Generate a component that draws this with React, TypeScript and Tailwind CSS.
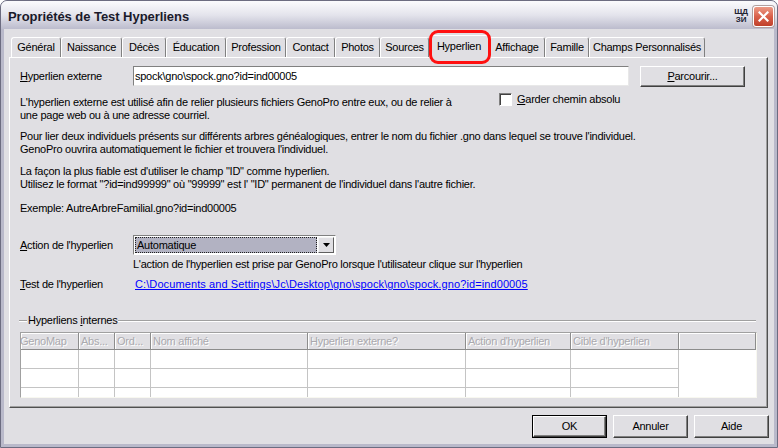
import React from 'react';

const tabs = [
  { label: 'Général', w: 'w-[50px]' },
  { label: 'Naissance', w: 'w-[61px]' },
  { label: 'Décès', w: 'w-[44px]' },
  { label: 'Éducation', w: 'w-[60px]' },
  { label: 'Profession', w: 'w-[60px]' },
  { label: 'Contact', w: 'w-[49px]' },
  { label: 'Photos', w: 'w-[45px]' },
  { label: 'Sources', w: 'w-[49px]' },
  { label: 'Hyperlien', w: 'w-[60px]', active: true },
  { label: 'Affichage', w: 'w-[56px]' },
  { label: 'Famille', w: 'w-[44px]' },
  { label: 'Champs Personnalisés', w: 'w-[116px]' },
];

const cols = [
  { label: 'GenoMap', w: 'w-[58px]' },
  { label: 'Abs...', w: 'w-[36px]' },
  { label: 'Ord...', w: 'w-[36px]' },
  { label: 'Nom affiché', w: 'w-[157px]' },
  { label: 'Hyperlien externe?', w: 'w-[158px]' },
  { label: "Action d'hyperlien", w: 'w-[105px]' },
  { label: "Cible d'hyperlien", w: 'w-[108px]' },
];

const raised =
  'border-t border-l border-t-white border-l-white border-r border-b border-r-[#404040] border-b-[#404040] shadow-[inset_-1px_-1px_0_#808080]';

function Button({ children, isDefault, className = '' }: { children: React.ReactNode; isDefault?: boolean; className?: string }) {
  if (isDefault) {
    return (
      <div className={`border border-black ${className}`}>
        <div className={`h-full w-full flex items-center justify-center bg-[#e0dfe3] ${raised}`}>{children}</div>
      </div>
    );
  }
  return <div className={`flex items-center justify-center bg-[#e0dfe3] ${raised} ${className}`}>{children}</div>;
}

export default function App() {
  return (
    <div className="w-[778px] h-[448px] overflow-hidden font-['Liberation_Sans',Arial,sans-serif] text-[11px] tracking-[-0.25px] leading-[13px] text-black">
      <div className="w-full h-full border border-[#6c6c80] rounded-t-[7px] bg-[#b9b9ca] flex flex-col overflow-hidden">
        {/* title bar */}
        <div className="h-[28px] shrink-0 flex items-center pl-[7px] pr-[3px] bg-linear-to-b from-[#fbfbfd] via-[#e4e4ec] to-[#bcbccd]">
          <span className="text-[13px] font-bold tracking-[-0.05px] text-[#1a1a2a] mt-[3px]">Propriétés de Test Hyperliens</span>
          <div className="ml-auto flex items-center gap-[5px] mt-[2px]">
            <div className="flex flex-col items-center text-[8px] leading-[8px] font-bold tracking-[0px] text-[#202030]">
              <span>ЩД</span>
              <span>ЗИ</span>
            </div>
            <div className="w-[21px] h-[21px] rounded-[3px] border border-white bg-linear-to-b from-[#eb9a86] via-[#d9604a] to-[#c0402a] flex items-center justify-center shadow-[0_0_0_1px_#b0a0a0]">
              <svg width="11" height="11" viewBox="0 0 11 11">
                <path d="M1.5 1.5 L9.5 9.5 M9.5 1.5 L1.5 9.5" stroke="white" strokeWidth="2.2" strokeLinecap="square" />
              </svg>
            </div>
          </div>
        </div>

        {/* client area */}
        <div className="flex-1 mx-[3px] mb-[3px] bg-[#e0dfe3] flex flex-col">
          {/* tabs */}
          <div className="mt-[6px] ml-[5px] h-[22px] flex items-end pl-[2px]">
            {tabs.map((t) =>
              t.active ? (
                <div
                  key={t.label}
                  className={`${t.w} relative z-10 h-[23px] -mb-[1px] bg-[#e0dfe3] border-t border-l border-white border-r border-r-[#808080] rounded-t-[3px] flex items-center justify-center pb-[2px]`}
                >
                  {t.label}
                  <div className="absolute left-[-1px] top-[-6px] w-[62px] h-[34px] border-[3px] border-[#ff1010] rounded-[9px]" />
                </div>
              ) : (
                <div
                  key={t.label}
                  className={`${t.w} h-[20px] bg-[#e0dfe3] border-t border-l border-white border-r border-r-[#808080] rounded-t-[3px] flex items-center justify-center`}
                >
                  {t.label}
                </div>
              )
            )}
          </div>

          {/* panel */}
          <div className="ml-[5px] w-[759px] h-[351px] border-t border-l border-white border-r border-b border-r-[#505050] border-b-[#505050] shadow-[inset_-1px_-1px_0_#a0a0a0] pt-[8px] pl-[10px] pr-[9px]">
            {/* hyperlien externe */}
            <div className="flex items-start h-[21px]">
              <div className="w-[113px] h-[20px] flex items-center">
                <span>
                  <u>H</u>yperlien externe
                </span>
              </div>
              <div className="w-[496px] h-[20px] bg-white border border-t-[#808080] border-l-[#808080] border-b-[#e8e8e8] border-r-[#e8e8e8] flex items-center pl-[1px]">
                spock\gno\spock.gno?id=ind00005
              </div>
              <Button className="ml-[11px] w-[105px] h-[21px]">
                <span>
                  <u>P</u>arcourir...
                </span>
              </Button>
            </div>

            <div className="mt-[9px] flex items-start">
              <p className="w-[479px] whitespace-nowrap">
                L'hyperlien externe est utilisé afin de relier plusieurs fichiers GenoPro entre eux, ou de relier à
                <br />
                une page web ou à une adresse courriel.
              </p>
              <div className="flex items-center -mt-[3px]">
                <div className="w-[13px] h-[13px] bg-white border border-t-[#808080] border-l-[#808080] border-b-white border-r-white shadow-[inset_1px_1px_0_#404040]" />
                <span className="ml-[5px]">
                  <u>G</u>arder chemin absolu
                </span>
              </div>
            </div>

            <p className="mt-[8px] whitespace-nowrap">
              Pour lier deux individuels présents sur différents arbres généalogiques, entrer le nom du fichier .gno dans lequel se trouve l'individuel.
              <br />
              GenoPro ouvrira automatiquement le fichier et trouvera l'individuel.
            </p>

            <p className="mt-[9px] whitespace-nowrap">
              La façon la plus fiable est d'utiliser le champ "ID" comme hyperlien.
              <br />
              Utilisez le format "?id=ind99999" où "99999" est l' "ID" permanent de l'individuel dans l'autre fichier.
            </p>

            <p className="mt-[11px]">Exemple: AutreArbreFamilial.gno?id=ind00005</p>

            {/* action */}
            <div className="mt-[20px] flex items-center h-[20px]">
              <div className="w-[113px]">
                <u>A</u>ction de l'hyperlien
              </div>
              <div className="w-[203px] h-[20px] bg-white border border-t-[#808080] border-l-[#808080] border-b-white border-r-white flex p-[1px] gap-[1px]">
                <div className="flex-1 bg-[#b2b2c2] border border-dotted border-[#202020] flex items-center pl-[1px]">Automatique</div>
                <div className="w-[16px] bg-[#e0dfe3] flex items-center justify-center border-t border-l border-[#f4f4f4] border-r border-b border-r-[#606060] border-b-[#606060]">
                  <svg width="7" height="4" viewBox="0 0 7 4">
                    <path d="M0 0 H7 L3.5 4 Z" fill="black" />
                  </svg>
                </div>
              </div>
            </div>
            <p className="mt-[3px] ml-[113px]">L'action de l'hyperlien est prise par GenoPro lorsque l'utilisateur clique sur l'hyperlien</p>

            <div className="mt-[7px] flex">
              <div className="w-[115px]">
                <u>T</u>est de l'hyperlien
              </div>
              <span className="text-[#0000ff] underline tracking-[0.1px]">
                C:\Documents and Settings\Jc\Desktop\gno\spock\gno\spock.gno?id=ind00005
              </span>
            </div>

            {/* group */}
            <div className="mt-[23px] -ml-[1px] w-[737px] flex items-center h-[13px]">
              <div className="w-[8px] h-[2px] border-t border-t-[#a0a0a0] border-b border-b-white" />
              <span className="px-[1px]">
                Hyperliens <u>i</u>nternes
              </span>
              <div className="flex-1 h-[2px] border-t border-t-[#a0a0a0] border-b border-b-white" />
            </div>

            {/* table */}
            <div className="mt-[5px] w-[737px] h-[66px] bg-white border border-t-[#a0a0a0] border-l-[#a0a0a0] border-b-[#f8f8f0] border-r-[#f8f8f0] overflow-hidden">
              <div className="flex h-[17px]">
                {cols.map((c) => (
                  <div
                    key={c.label}
                    className={`${c.w} shrink-0 h-full bg-[#e0dfe3] border-r border-b border-[#8c8c8c] shadow-[inset_1px_1px_0_#ffffff] overflow-hidden whitespace-nowrap pl-[2px] flex items-center text-[#aaa9ae] [text-shadow:1px_1px_0_#ffffff]`}
                  >
                    <span className={c.label === 'GenoMap' ? '-ml-[3px]' : ''}>{c.label}</span>
                  </div>
                ))}
                <div className="flex-1 h-full bg-[#e0dfe3] border-r border-b border-[#8c8c8c] shadow-[inset_1px_1px_0_#ffffff]" />
              </div>
              <div className="flex">
                <div className="flex flex-col">
                  {[0, 1, 2].map((r) => (
                    <div key={r} className="flex h-[19px]">
                      {cols.map((c) => (
                        <div key={c.label} className={`${c.w} shrink-0 h-full border-r border-b border-[#c4c4c4]`} />
                      ))}
                    </div>
                  ))}
                </div>
              </div>
            </div>
          </div>

          {/* buttons */}
          <div className="mt-[7px] flex justify-end gap-[6px] pr-[5px]">
            <Button isDefault className="w-[75px] h-[23px]">
              OK
            </Button>
            <Button className="w-[75px] h-[23px]">Annuler</Button>
            <Button className="w-[75px] h-[23px]">Aide</Button>
          </div>
        </div>
      </div>
    </div>
  );
}
